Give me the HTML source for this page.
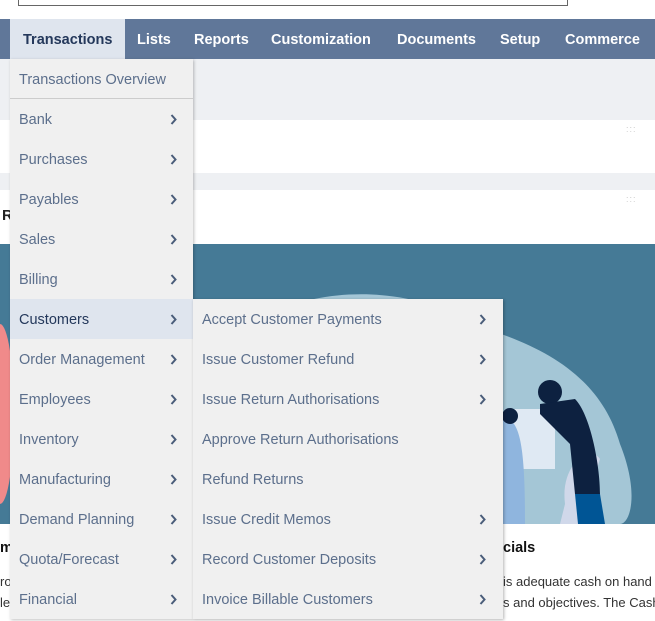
<!DOCTYPE html>
<html><head><meta charset="utf-8"><style>
*{margin:0;padding:0;box-sizing:border-box}
body{width:655px;height:615px;overflow:hidden;position:relative;background:#fff;font-family:"Liberation Sans",sans-serif}
.abs{position:absolute}
.nav{left:0;top:19px;width:655px;height:40px;background:#607799}
.nav span{position:absolute;top:1px;line-height:40px;color:#fff;font-weight:bold;font-size:14.5px}
.menu{left:10px;top:59px;width:183px;height:560px;background:#f0f0f0;box-shadow:1px 1px 3px rgba(0,0,0,.25)}
.sub{left:193px;top:299px;width:310px;height:320px;background:#f0f0f0;box-shadow:1px 1px 3px rgba(0,0,0,.3)}
.it{position:absolute;left:0;width:100%;height:40px;line-height:42px;padding-left:9px;color:#5c6f8c;font-size:14.5px}
.it svg{position:absolute;right:16px;top:15px}
.sub .it svg{right:17px}
</style></head><body>
<svg width="0" height="0" style="position:absolute"><defs><symbol id="c" viewBox="0 0 7 11"><path d="M1.5 1 L5.5 5.5 L1.5 10" fill="none" stroke="#4a5d7a" stroke-width="2"/></symbol></defs></svg>
<div class="abs" style="left:18px;top:-2px;width:550px;height:8px;border:1px solid #666;border-top:none"></div>
<div class="abs nav">
<div class="abs" style="left:10px;top:0;width:115px;height:40px;background:#dfe5ee"></div>
<span style="left:23px;color:#24385b">Transactions</span>
<span style="left:137px">Lists</span>
<span style="left:194px">Reports</span>
<span style="left:271px">Customization</span>
<span style="left:397px">Documents</span>
<span style="left:500px">Setup</span>
<span style="left:565px">Commerce</span>
</div>
<div class="abs" style="left:0;top:59px;width:655px;height:131px;background:#eef0f3"></div>
<div class="abs" style="left:0;top:120px;width:655px;height:53px;background:#fff"></div>
<div class="abs" style="left:0;top:190px;width:655px;height:54px;background:#fff"></div>
<div class="abs" style="left:626px;top:124px;color:#ccc;font-size:9px;letter-spacing:1px">:::</div>
<div class="abs" style="left:626px;top:194px;color:#ccc;font-size:9px;letter-spacing:1px">:::</div>
<div class="abs" style="left:2px;top:207px;font-size:15px;font-weight:bold;color:#222">R</div>
<div class="abs" style="left:0;top:244px;width:655px;height:280px;background:#457a96;overflow:hidden">
<svg width="655" height="280" style="position:absolute;left:0;top:0">
<path d="M270 70 C330 40 420 45 470 80 C540 100 600 130 620 200 C640 250 630 280 620 280 L300 280 C280 220 250 150 270 70Z" fill="#a4c6d6"/>
<ellipse cx="0" cy="170" rx="14" ry="90" fill="#f08a8a"/>
<rect x="505" y="165" width="50" height="60" fill="#dfe9f3"/>
<path d="M500 175 C520 170 525 200 525 280 L495 280 Z" fill="#8fb5de"/>
<path d="M565 260 C560 220 590 200 600 215 L580 280 L560 280Z" fill="#d0d8ea"/>
<circle cx="550" cy="148" r="12" fill="#0d2140"/>
<path d="M540 160 L575 155 C590 170 600 220 600 250 L575 250 L570 200 L540 170Z" fill="#0d2140"/>
<path d="M575 250 L600 250 L605 280 L578 280Z" fill="#005595"/>
<circle cx="510" cy="172" r="8" fill="#0d2140"/>
</svg></div>
<div class="abs" style="left:0;top:540px;font-size:14.5px;font-weight:bold;color:#111">m</div>
<div class="abs" style="left:503px;top:540px;font-size:14.5px;font-weight:bold;color:#111">cials</div>
<div class="abs" style="left:0;top:574px;font-size:13px;color:#333">ro</div>
<div class="abs" style="left:0;top:595px;font-size:13px;color:#333">le</div>
<div class="abs" style="left:503px;top:574px;font-size:13px;color:#333;white-space:nowrap">is adequate cash on hand</div>
<div class="abs" style="left:503px;top:595px;font-size:13px;color:#333;white-space:nowrap">s and objectives. The Cash</div>
<div class="abs menu">
<div class="it" style="top:0">Transactions Overview</div>
<div class="abs" style="left:0;top:39px;width:183px;height:1px;background:#ccc"></div>
<div class="it" style="top:40px">Bank<svg width="7" height="11"><use href="#c"/></svg></div>
<div class="it" style="top:80px">Purchases<svg width="7" height="11"><use href="#c"/></svg></div>
<div class="it" style="top:120px">Payables<svg width="7" height="11"><use href="#c"/></svg></div>
<div class="it" style="top:160px">Sales<svg width="7" height="11"><use href="#c"/></svg></div>
<div class="it" style="top:200px">Billing<svg width="7" height="11"><use href="#c"/></svg></div>
<div class="it" style="top:240px;background:#dfe5ee;color:#24385b">Customers<svg width="7" height="11"><use href="#c"/></svg></div>
<div class="it" style="top:280px">Order Management<svg width="7" height="11"><use href="#c"/></svg></div>
<div class="it" style="top:320px">Employees<svg width="7" height="11"><use href="#c"/></svg></div>
<div class="it" style="top:360px">Inventory<svg width="7" height="11"><use href="#c"/></svg></div>
<div class="it" style="top:400px">Manufacturing<svg width="7" height="11"><use href="#c"/></svg></div>
<div class="it" style="top:440px">Demand Planning<svg width="7" height="11"><use href="#c"/></svg></div>
<div class="it" style="top:480px">Quota/Forecast<svg width="7" height="11"><use href="#c"/></svg></div>
<div class="it" style="top:520px">Financial<svg width="7" height="11"><use href="#c"/></svg></div>
</div>
<div class="abs sub">
<div class="it" style="top:0">Accept Customer Payments<svg width="7" height="11"><use href="#c"/></svg></div>
<div class="it" style="top:40px">Issue Customer Refund<svg width="7" height="11"><use href="#c"/></svg></div>
<div class="it" style="top:80px">Issue Return Authorisations<svg width="7" height="11"><use href="#c"/></svg></div>
<div class="it" style="top:120px">Approve Return Authorisations</div>
<div class="it" style="top:160px">Refund Returns</div>
<div class="it" style="top:200px">Issue Credit Memos<svg width="7" height="11"><use href="#c"/></svg></div>
<div class="it" style="top:240px">Record Customer Deposits<svg width="7" height="11"><use href="#c"/></svg></div>
<div class="it" style="top:280px">Invoice Billable Customers<svg width="7" height="11"><use href="#c"/></svg></div>
</div>
</body></html>
